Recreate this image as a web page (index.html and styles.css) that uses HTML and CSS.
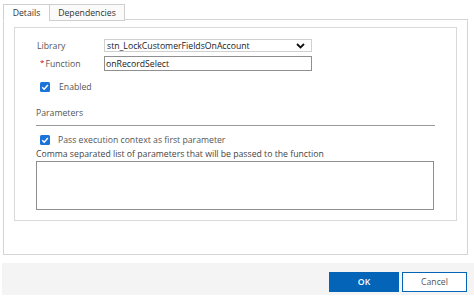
FILE: index.html
```html
<!DOCTYPE html>
<html>
<head>
<meta charset="utf-8">
<link rel="stylesheet" href="styles.css">
</head>
<body>
<div class="tabs">
  <div class="tab active">Details</div>
  <div class="tab">Dependencies</div>
</div>
<div class="panel">
  <div class="box">
    <div class="row row-lib">
      <div class="label">Library</div>
      <div class="select"><span>stn_LockCustomerFieldsOnAccount</span>
        <svg class="chev" width="9" height="6" viewBox="0 0 9 6"><path d="M1 1 L4.5 4.5 L8 1" fill="none" stroke="#111" stroke-width="1.8"/></svg>
      </div>
    </div>
    <div class="row row-fn">
      <div class="label"><span class="req">*</span>Function</div>
      <div class="input">onRecordSelect</div>
    </div>
    <div class="check-row row-en">
      <span class="cb"><svg width="10" height="10" viewBox="0 0 10 10"><path d="M2.2 5.2 L4.2 7.2 L7.9 2.9" fill="none" stroke="#fff" stroke-width="1.5"/></svg></span>
      <span class="cb-text">Enabled</span>
    </div>
    <div class="section">Parameters</div>
    <div class="rule"></div>
    <div class="check-row row-pass">
      <span class="cb"><svg width="10" height="10" viewBox="0 0 10 10"><path d="M2.2 5.2 L4.2 7.2 L7.9 2.9" fill="none" stroke="#fff" stroke-width="1.5"/></svg></span>
      <span class="cb-text">Pass execution context as first parameter</span>
    </div>
    <div class="hint">Comma separated list of parameters that will be passed to the function</div>
    <div class="textarea"></div>
  </div>
</div>
<div class="footer">
  <button class="btn primary">OK</button>
  <button class="btn secondary">Cancel</button>
</div>
</body>
</html>
```
FILE: styles.css
```css
html, body { margin: 0; padding: 0; background: #fff; }
body {
  font-family: "Open Sans", "Noto Sans", sans-serif;
  font-size: 8.7px;
  color: #444;
  width: 474px;
  height: 297px;
  overflow: hidden;
}
.tabs {
  display: flex;
  padding: 4px 0 0 3px;
  height: 16px;
}
.tab {
  box-sizing: border-box;
  height: 17px;
  border: 1px solid #cfcfcf;
  border-bottom: 1px solid #cfcfcf;
  display: flex;
  align-items: center;
  justify-content: center;
  color: #333;
  background: #fafafa;
  position: relative;
  z-index: 1;
}
.tab.active {
  width: 46px;
  background: #fff;
  border-bottom-color: #fff;
  border-right: none;
}
.tab:not(.active) { width: 76px; }
.panel {
  box-sizing: border-box;
  margin: -1px 6px 0 3px;
  height: 236px;
  border: 1px solid #d4d4d4;
  padding: 7px 10px 0 10px;
}
.box {
  box-sizing: border-box;
  border: 1px solid #d9d9d9;
  height: 194px;
  padding: 11px 0 0 0;
}
.row { display: flex; align-items: center; }
.label { width: 67px; padding-left: 22px; color: #555; }
.row-lib { height: 13px; }
.row-fn { height: 15px; margin-top: 4px; }
.select {
  box-sizing: border-box;
  width: 208px;
  height: 13px;
  border: 1px solid #d0d0d0;
  display: flex;
  align-items: center;
  justify-content: space-between;
  padding: 0 6px 0 2px;
  color: #222;
}
.chev { display: block; }
.input {
  box-sizing: border-box;
  width: 208px;
  height: 15px;
  border: 1px solid #8f8f8f;
  display: flex;
  align-items: center;
  padding-left: 1px;
  color: #222;
}
.req { color: #c00; margin-left: 3px; margin-right: 1px; font-size: 8px; position: relative; top: -2px; }
.check-row { display: flex; align-items: center; padding-left: 25px; }
.row-en { margin-top: 11px; height: 10px; }
.row-pass { margin-top: 9px; height: 10px; }
.cb {
  width: 10px; height: 10px;
  background: #1a73d9;
  border-radius: 1.5px;
  display: block;
}
.cb svg { display: block; }
.row-en .cb-text { margin-left: 9px; color: #555; }
.row-pass .cb-text { margin-left: 8px; color: #555; }
.section { margin-top: 15px; height: 12px; line-height: 12px; padding-left: 21px; color: #555; }
.rule { margin: 6px 0 0 21px; width: 399px; border-top: 1px solid #999; }
.hint { margin-top: 3px; height: 12px; line-height: 12px; padding-left: 21px; color: #444; }
.textarea {
  box-sizing: border-box;
  margin: 1px 0 0 21px;
  width: 398px;
  height: 49px;
  border: 1px solid #8f8f8f;
}
.footer {
  margin: 8px 0 0 2px;
  height: 32px;
  background: #f4f4f4;
  display: flex;
  justify-content: flex-end;
  align-items: flex-start;
  padding: 9px 7px 0 0;
  box-sizing: border-box;
  gap: 3px;
}
.btn {
  box-sizing: border-box;
  height: 20px;
  font-family: "Open Sans", "Noto Sans", sans-serif;
  font-size: 8.7px;
  padding: 0;
  margin: 0;
}
.primary {
  width: 70px;
  background: #0364b8;
  border: 1px solid #0364b8;
  color: #fff;
  font-weight: 600;
}
.secondary {
  width: 65px;
  background: #fff;
  border: 1px solid #0364b8;
  color: #555;
}
```
